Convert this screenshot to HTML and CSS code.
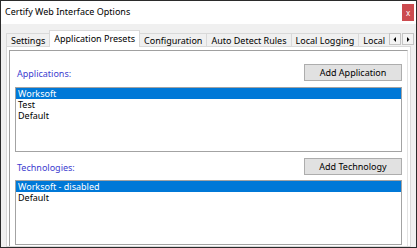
FILE: index.html
```html
<!DOCTYPE html>
<html>
<head>
<meta charset="utf-8">
<link rel="stylesheet" href="styles.css">
</head>
<body>
<div class="window">
  <div class="titlebar">
    <span class="title">Certify Web Interface Options</span>
    <span class="close">x</span>
  </div>
  <div class="client">
    <div class="tabstrip">
      <div class="tabs">
        <div class="tab">Settings</div>
        <div class="tab active">Application Presets</div>
        <div class="tab">Configuration</div>
        <div class="tab">Auto Detect Rules</div>
        <div class="tab">Local Logging</div>
        <div class="tab">Local</div>
      </div>
      <div class="scroll">
        <div class="sbtn"><svg width="4" height="5" viewBox="0 0 4 5"><path d="M3 0 L3 5 L0.5 2.5 Z" fill="#000"/></svg></div>
        <div class="sbtn"><svg width="4" height="5" viewBox="0 0 4 5"><path d="M1 0 L1 5 L3.5 2.5 Z" fill="#000"/></svg></div>
      </div>
    </div>
    <div class="panel">
      <div class="inner">
        <div class="row">
          <span class="label">Applications:</span>
          <div class="btn">Add Application</div>
        </div>
        <div class="listbox">
          <div class="item sel">Worksoft</div>
          <div class="item">Test</div>
          <div class="item">Default</div>
        </div>
        <div class="row row2">
          <span class="label">Technologies:</span>
          <div class="btn">Add Technology</div>
        </div>
        <div class="listbox lb2">
          <div class="item sel">Worksoft - disabled</div>
          <div class="item">Default</div>
        </div>
      </div>
    </div>
  </div>
</div>
</body>
</html>
```
FILE: styles.css
```css
html, body {
  margin: 0;
  padding: 0;
}
body {
  width: 417px;
  height: 248px;
  overflow: hidden;
  font-family: "Noto Sans", "Open Sans", sans-serif;
  font-size: 9px;
  color: #000;
  background: #fff;
}
.window {
  box-sizing: border-box;
  width: 417px;
  height: 248px;
  border: 1px solid #2b2b2b;
  background: #f0f0f0;
  display: flex;
  flex-direction: column;
  overflow: hidden;
}
.titlebar {
  height: 23px;
  flex-shrink: 0;
  background: #fff;
  display: flex;
  align-items: flex-start;
  padding-left: 4px;
}
.title {
  flex: 1;
  line-height: 21px;
  white-space: nowrap;
}
.close {
  width: 12px;
  height: 17px;
  margin-top: 3px;
  margin-right: 2px;
  background: #cc4b4f;
  color: #fff;
  font-size: 8px;
  display: flex;
  align-items: center;
  justify-content: center;
}
.client {
  flex: 1;
  min-height: 0;
  display: flex;
  flex-direction: column;
  padding: 6px 5px 0 5px;
}
.tabstrip {
  height: 17px;
  flex-shrink: 0;
  display: flex;
  align-items: flex-end;
  margin-right: -3px;
  position: relative;
  z-index: 1;
}
.tabs {
  flex: 1;
  min-width: 0;
  height: 17px;
  display: flex;
  align-items: flex-end;
  overflow: hidden;
}
.tab {
  box-sizing: border-box;
  height: 13px;
  margin-bottom: 1px;
  margin-right: -1px;
  padding: 0 4px;
  border: 1px solid #d9d9d9;
  border-bottom: 0;
  background: #f0f0f0;
  display: flex;
  align-items: center;
  white-space: nowrap;
  flex-shrink: 0;
}
.tab.active {
  height: 17px;
  margin-bottom: 0;
  padding-bottom: 2px;
  background: #fff;
  position: relative;
  z-index: 1;
}
.scroll {
  display: flex;
  gap: 1px;
  margin-bottom: 2px;
  flex-shrink: 0;
}
.sbtn {
  box-sizing: border-box;
  width: 12px;
  height: 12px;
  border: 1px solid #c4c4c4;
  background: #f4f4f4;
  display: flex;
  align-items: center;
  justify-content: center;
}
.panel {
  flex: 1;
  min-height: 0;
  margin-top: -1px;
  border: 1px solid #d9d9d9;
  background: #fff;
  padding: 3px 2px 0 2px;
  overflow: hidden;
}
.inner {
  height: 220px;
  border: 1px solid;
  border-color: #a0a0a0 #e3e3e3 #e3e3e3 #a0a0a0;
  padding: 13px 5px 0 5px;
  background: #fff;
}
.row {
  height: 17px;
  display: flex;
  align-items: center;
  justify-content: space-between;
}
.row2 {
  margin-top: 6px;
}
.label {
  padding-left: 2px;
  padding-top: 2px;
  color: #3c3ccf;
}
.btn {
  box-sizing: border-box;
  width: 98px;
  height: 17px;
  border: 1px solid #adadad;
  background: #e1e1e1;
  display: flex;
  align-items: center;
  justify-content: center;
  white-space: nowrap;
}
.listbox {
  box-sizing: border-box;
  height: 65px;
  margin-top: 6px;
  border: 1px solid #a3a3a3;
  background: #fff;
}
.lb2 {
  margin-top: 5px;
}
.item {
  height: 11px;
  line-height: 11px;
  padding-left: 2px;
  white-space: nowrap;
}
.item.sel {
  background: #0078d7;
  color: #fff;
}
```
